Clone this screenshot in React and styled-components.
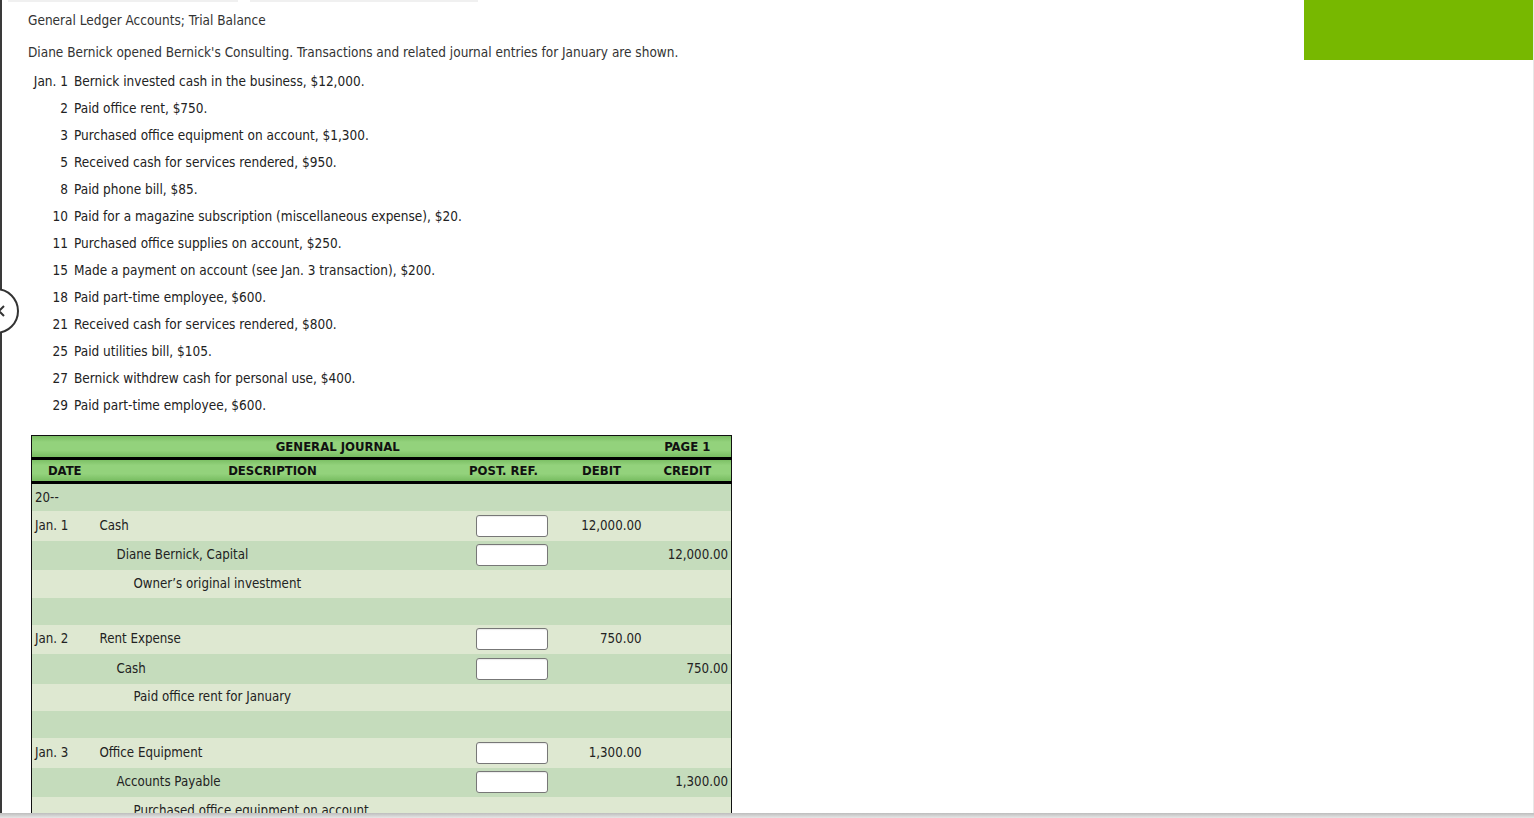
import React from "react";
import styled, { createGlobalStyle } from "styled-components";

const GlobalStyle = createGlobalStyle`
  html, body {
    margin: 0;
    padding: 0;
    background: #fff;
    overflow: hidden;
  }
  body {
    font-family: "DejaVu Sans Condensed", "DejaVu Sans", Verdana, sans-serif;
    font-stretch: condensed;
    font-size: 13.5px;
    color: #222;
  }
`;

const Page = styled.div`
  display: flex;
  height: 818px;
  border-left: 2px solid #3a3a3a;
  box-sizing: border-box;
  position: relative;
`;

const Content = styled.div`
  flex: 1;
  padding: 12px 0 0 26px;
`;

const TopShade = styled.div`
  display: flex;
  gap: 12px;
  height: 2px;
  margin: -12px 0 10px -20px;
`;

const ShadeBit = styled.div`
  width: ${(p) => p.w}px;
  background: #f0f0f0;
`;

const Side = styled.div`
  width: 229px;
  border-right: 1px solid #e8e8e8;
`;

const Banner = styled.div`
  height: 60px;
  background: #77b800;
`;

const Heading = styled.div`
  line-height: 16px;
  color: #333;
  margin-bottom: 16px;
`;

const Intro = styled.div`
  line-height: 16px;
  color: #333;
  margin-bottom: 8px;
`;

const List = styled.div`
  display: grid;
  grid-template-columns: 37px 1fr;
  column-gap: 6px;
  margin-left: 3px;
  margin-bottom: 16px;
`;

const Day = styled.div`
  text-align: right;
  line-height: 27px;
`;

const Item = styled.div`
  line-height: 27px;
`;

const Journal = styled.table`
  margin-left: 3px;
  width: 700px;
  border-collapse: collapse;
  table-layout: fixed;
  border: 1px solid #111;
  border-bottom: 0;
  font-size: 13.2px;
`;

const HeadRow = styled.tr`
  background: linear-gradient(#79bd62, #93d27c 30%, #93d27c 70%, #7bbf64);
  border-bottom: 3px solid #000;
`;

const HeadCell = styled.th`
  font-weight: bold;
  font-size: 13px;
  color: #111;
  text-align: center;
  height: 21px;
  padding: 0;
`;

const Row = styled.tr`
  background: ${(p) => (p.dark ? "#c5dcbc" : "#dee8d1")};
`;

const Cell = styled.td`
  padding: 0 ${(p) => p.pr || 0}px 0 ${(p) => p.pl || 0}px;
  height: ${(p) => p.h}px;
  line-height: 16px;
  text-align: ${(p) => (p.right ? "right" : "left")};
  white-space: nowrap;
  overflow: hidden;
`;

const RefInput = styled.input`
  width: 72px;
  height: 22px;
  box-sizing: border-box;
  border: 1px solid #777;
  border-radius: 3px;
  background: #fff;
  display: block;
  box-shadow: inset 0 1px 1px rgba(0, 0, 0, 0.08);
`;

const BackButton = styled.div`
  position: fixed;
  left: -27px;
  top: 288px;
  width: 42px;
  height: 42px;
  border-radius: 50%;
  border: 2.5px solid #333;
  background: #fff;
  display: flex;
  align-items: center;
  justify-content: center;

  svg {
    margin-left: 11px;
  }
`;

const BottomBar = styled.div`
  position: fixed;
  left: 0;
  right: 0;
  bottom: 0;
  height: 5px;
  background: linear-gradient(#bdbdbd, #e6e6e6);
`;

const transactions = [
  ["Jan. 1", "Bernick invested cash in the business, $12,000."],
  ["2", "Paid office rent, $750."],
  ["3", "Purchased office equipment on account, $1,300."],
  ["5", "Received cash for services rendered, $950."],
  ["8", "Paid phone bill, $85."],
  ["10", "Paid for a magazine subscription (miscellaneous expense), $20."],
  ["11", "Purchased office supplies on account, $250."],
  ["15", "Made a payment on account (see Jan. 3 transaction), $200."],
  ["18", "Paid part-time employee, $600."],
  ["21", "Received cash for services rendered, $800."],
  ["25", "Paid utilities bill, $105."],
  ["27", "Bernick withdrew cash for personal use, $400."],
  ["29", "Paid part-time employee, $600."],
];

// level: 0 = debit account, 1 = credit account, 2 = explanation
const entries = [
  { date: "20--" },
  { date: "Jan. 1", desc: "Cash", level: 0, input: true, debit: "12,000.00" },
  { desc: "Diane Bernick, Capital", level: 1, input: true, credit: "12,000.00" },
  { desc: "Owner’s original investment", level: 2 },
  {},
  { date: "Jan. 2", desc: "Rent Expense", level: 0, input: true, debit: "750.00" },
  { desc: "Cash", level: 1, input: true, credit: "750.00" },
  { desc: "Paid office rent for January", level: 2 },
  {},
  { date: "Jan. 3", desc: "Office Equipment", level: 0, input: true, debit: "1,300.00" },
  { desc: "Accounts Payable", level: 1, input: true, credit: "1,300.00" },
  { desc: "Purchased office equipment on account", level: 2 },
];

const indent = [2, 19, 36];

const rowHeight = (e) => (e.input ? 29.5 : e.desc ? 27.5 : 27);

const App = () => {
  return (
    <>
      <GlobalStyle />
      <Page>
        <Content>
          <TopShade>
            <ShadeBit w={230} />
            <ShadeBit w={228} />
          </TopShade>
          <Heading>General Ledger Accounts; Trial Balance</Heading>
          <Intro>
            Diane Bernick opened Bernick's Consulting. Transactions and related
            journal entries for January are shown.
          </Intro>
          <List>
            {transactions.map(([d, t], i) => (
              <React.Fragment key={i}>
                <Day>{d}</Day>
                <Item>{t}</Item>
              </React.Fragment>
            ))}
          </List>
          <Journal>
            <colgroup>
              <col style={{ width: 66 }} />
              <col style={{ width: 350 }} />
              <col style={{ width: 112 }} />
              <col style={{ width: 84 }} />
              <col style={{ width: 88 }} />
            </colgroup>
            <thead>
              <HeadRow>
                <HeadCell colSpan={4}>GENERAL JOURNAL</HeadCell>
                <HeadCell>PAGE 1</HeadCell>
              </HeadRow>
              <HeadRow>
                <HeadCell>DATE</HeadCell>
                <HeadCell>DESCRIPTION</HeadCell>
                <HeadCell>POST. REF.</HeadCell>
                <HeadCell>DEBIT</HeadCell>
                <HeadCell>CREDIT</HeadCell>
              </HeadRow>
            </thead>
            <tbody>
              {entries.map((e, i) => (
                <Row key={i} dark={i % 2 === 0}>
                  <Cell h={rowHeight(e)} pl={3}>
                    {e.date}
                  </Cell>
                  <Cell pl={e.desc ? indent[e.level] : 0}>{e.desc}</Cell>
                  <Cell pl={28}>{e.input && <RefInput />}</Cell>
                  <Cell right pr={2}>
                    {e.debit}
                  </Cell>
                  <Cell right pr={3}>
                    {e.credit}
                  </Cell>
                </Row>
              ))}
            </tbody>
          </Journal>
        </Content>
        <Side>
          <Banner />
        </Side>
        <BackButton>
          <svg width="12" height="14" viewBox="0 0 12 14">
            <path d="M8 2 L3 7 L8 12" fill="none" stroke="#333" strokeWidth="2" />
          </svg>
        </BackButton>
        <BottomBar />
      </Page>
    </>
  );
};

export default App;
